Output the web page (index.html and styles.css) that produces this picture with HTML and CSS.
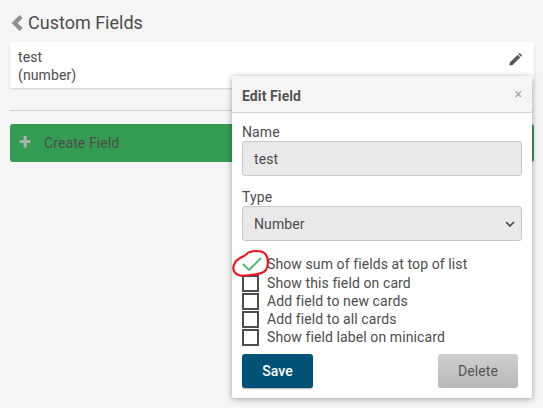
FILE: index.html
```html
<!DOCTYPE html>
<html lang="en">
<head>
<meta charset="utf-8">
<title>Custom Fields</title>
<link rel="stylesheet" href="styles.css">
</head>
<body>
<main class="sidebar">
  <h2 class="title">
    <svg class="back" viewBox="0 0 12 16" width="12" height="16" aria-hidden="true"><path d="M8.6 0 L11.6 3 L6.6 8 L11.6 13 L8.6 16 L0.6 8 Z"/></svg>
    <span>Custom Fields</span>
  </h2>
  <div class="field-card">
    <div class="field-text">test<br>(number)</div>
    <svg class="pencil" viewBox="0 0 13 13" width="13" height="13" aria-hidden="true"><path d="M0.4 12.6 L1 9.3 L8.6 1.7 L11.3 4.4 L3.7 12 Z M9.3 1 L10.1 0.3 Q10.5 0 10.9 0.3 L12.7 2.1 Q13 2.5 12.7 2.9 L12 3.7 Z"/><path d="M2.4 8.6 L9.3 2.4 M4.4 10.6 L10.6 3.7" stroke="#8a8a8a" stroke-width=".5" fill="none"/></svg>
  </div>
  <hr class="rule">
  <button class="create"><span class="plus">+</span><span>Create Field</span></button>
</main>

<section class="popup">
  <header class="popup-head">
    <span class="popup-title">Edit Field</span>
    <span class="close">×</span>
  </header>
  <div class="popup-body">
    <label class="lbl">Name</label>
    <div class="input">test</div>
    <label class="lbl type-lbl">Type</label>
    <div class="input select">
      <span>Number</span>
      <svg viewBox="0 0 10 6" width="10" height="6" aria-hidden="true"><path d="M1 1 L5 5 L9 1" fill="none" stroke="#444" stroke-width="1.6"/></svg>
    </div>
    <ul class="checks">
      <li class="check first">
        <span class="mark">
          <svg viewBox="0 0 38 30" width="38" height="30" aria-hidden="true">
            <path d="M2 16 C3 11 8 9 12 7 C15 6 15 3 18 3 C24 1 32 2 34 6 C37 10 36 18 34 21 C30 26 22 25 18 26 C12 27 5 28 2 22 C1 20 1 18 2 16" fill="none" stroke="#f0141e" stroke-width="2.1"/>
            <path d="M11 15 L17 21 L29 9" fill="none" stroke="#4cb572" stroke-width="1.9"/>
          </svg>
        </span>
        <span>Show sum of fields at top of list</span>
      </li>
      <li class="check"><span class="box"></span><span>Show this field on card</span></li>
      <li class="check"><span class="box"></span><span>Add field to new cards</span></li>
      <li class="check"><span class="box"></span><span>Add field to all cards</span></li>
      <li class="check"><span class="box"></span><span>Show field label on minicard</span></li>
    </ul>
    <div class="actions">
      <button class="save">Save</button>
      <button class="delete">Delete</button>
    </div>
  </div>
</section>
</body>
</html>
```

FILE: styles.css
```css
* { box-sizing: border-box; }
html, body { height: 100%; }
body {
  margin: 0;
  background: #f5f5f5;
  color: #4d4d4d;
  font-family: Roboto, "Liberation Sans", sans-serif;
  font-size: 14px;
  letter-spacing: 0.1px;
  overflow: hidden;
}
.sidebar { padding: 12px 9px 0 10px; }
.title {
  display: flex;
  align-items: center;
  gap: 5px;
  margin: 0 0 9px;
  height: 21px;
  font-size: 18px;
  font-weight: 400;
  line-height: 21px;
  letter-spacing: 0;
}
.back { fill: #8f8f8f; margin-left: 1px; }
.field-card {
  display: flex;
  justify-content: space-between;
  align-items: flex-start;
  height: 46px;
  padding: 6px 12px 0 8px;
  background: #fff;
  border-radius: 2px;
  box-shadow: 0 1px 2px rgba(0,0,0,.15);
}
.field-text { line-height: 18px; }
.pencil { fill: #555; margin-top: 5px; }
.rule { border: 0; border-top: 1px solid #d2d2d2; margin: 22px 0 13px; }
.create {
  display: flex;
  align-items: center;
  width: 100%;
  height: 38px;
  padding: 0 9px;
  border: 0;
  border-radius: 3px;
  background: #349b52;
  color: #4d4d4d;
  font: 14px Roboto, sans-serif;
  letter-spacing: 0.1px;
}
.plus { width: 25px; text-align: left; font-size: 22px; font-weight: 700; color: #a9b5ac; line-height: 20px; margin-bottom: 2px; }
.popup {
  position: absolute;
  left: 232px;
  top: 76px;
  width: 300px;
  height: 322px;
  background: #fff;
  border-radius: 2px;
  box-shadow: 0 1px 6px rgba(0,0,0,.35);
}
.popup-head {
  display: flex;
  justify-content: space-between;
  align-items: center;
  height: 37px;
  padding: 3px 10px 0;
  background: #f5f5f5;
  border-bottom: 1px solid #d2d2d2;
}
.popup-title { font-weight: 700; font-size: 14px; color: #555; }
.close { color: #aaa; font-size: 14px; margin-top: -3px; }
.popup-body { padding: 10px 10px 0; }
.lbl { display: block; line-height: 18px; height: 18px; }
.input {
  display: flex;
  align-items: center;
  justify-content: space-between;
  height: 35px;
  width: 280px;
  padding: 0 11px;
  background: #e9e9e9;
  border: 1px solid #c9c9c9;
  border-radius: 3px;
  font-size: 14px;
}
.type-lbl { margin-top: 12px; }
.select { padding-right: 6px; }
.checks { list-style: none; margin: 13px 0 0; padding: 0; }
.check { display: flex; align-items: center; height: 18px; line-height: 18px; gap: 8px; }
.check.first { height: 20px; align-items: center; }
.mark { position: relative; width: 17px; height: 17px; flex: none; }
.mark svg { position: absolute; left: -10px; top: -7px; }
.box { width: 17px; height: 17px; flex: none; border: 2px solid #4d4d4d; background: #fff; }
.actions { display: flex; justify-content: space-between; margin-top: 8px; padding-right: 4px; }
.save, .delete { height: 34px; border: 0; border-radius: 3px; font: 500 14px Roboto, sans-serif; letter-spacing: 0.1px; }
.save { width: 71px; background: #005377; color: #fff; box-shadow: 0 1px 1px rgba(0,0,0,.3); }
.delete { width: 80px; background: linear-gradient(#cfcfcf, #b9b9b9); color: #555; font-weight: 400; }
```
